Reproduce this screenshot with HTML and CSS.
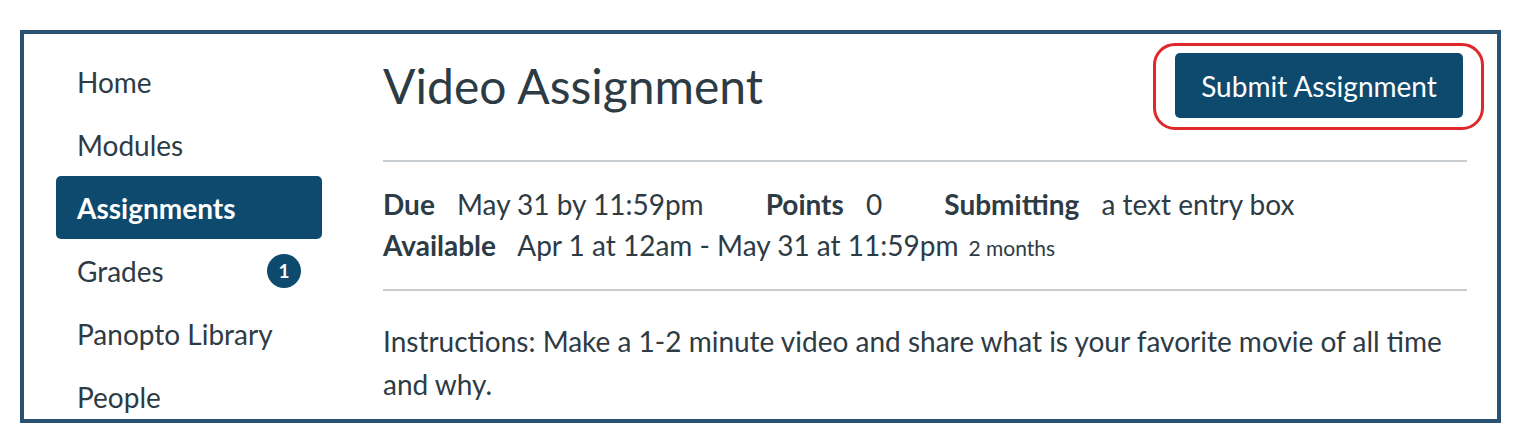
FILE: index.html
```html
<!DOCTYPE html>
<html lang="en">
<head>
    <meta charset="UTF-8">
    <meta name="viewport" content="width=device-width, initial-scale=1.0">
    <title>Video Assignment</title>
    <link rel="stylesheet" href="styles.css">
</head>
<body>
    <div id="page">
        <div id="frame">
            <nav id="course-nav">
                <a class="nav-item" href="#">Home</a>
                <a class="nav-item" href="#">Modules</a>
                <a class="nav-item active" href="#">Assignments</a>
                <a class="nav-item" href="#">Grades <span class="badge">1</span></a>
                <a class="nav-item" href="#">Panopto Library</a>
                <a class="nav-item" href="#">People</a>
            </nav>
            <main id="assignment">
                <div class="assignment-header">
                    <h1>Video Assignment</h1>
                    <span class="highlight">
                        <button id="submit-button">Submit Assignment</button>
                    </span>
                </div>
                <div class="details">
                    <div class="detail-row">
                        <span class="detail"><b>Due</b> May 31 by 11:59pm</span>
                        <span class="detail"><b>Points</b> 0</span>
                        <span class="detail"><b>Submitting</b> a text entry box</span>
                    </div>
                    <div class="detail-row">
                        <span class="detail"><b>Available</b> Apr 1 at 12am - May 31 at 11:59pm<small>2 months</small></span>
                    </div>
                </div>
                <p class="instructions">Instructions: Make a 1-2 minute video and share what is your favorite movie of all time and why.</p>
            </main>
        </div>
    </div>
</body>
</html>
```

FILE: styles.css
```css
:root {
    --text-color: #2d3b45;
    --brand: #0e4a6e;
    --frame: #2a5273;
    --divider: #c7cdd1;
    --annotation: #e0282a;
}

body {
    margin: 0;
    padding: 0;
    background-color: white;
    font-family: Lato, "Noto Sans", sans-serif;
    color: var(--text-color);
}
#page {
    padding: 30px 23px 0 20px;
}
#frame {
    height: 393px;
    box-sizing: border-box;
    border: 4px solid var(--frame);
    display: flex;
    overflow: hidden;
}
#course-nav {
    width: 266px;
    flex-shrink: 0;
    padding: 16px 0 0 32px;
    display: flex;
    flex-direction: column;
}
.nav-item {
    height: 63px;
    flex-shrink: 0;
    display: flex;
    align-items: center;
    justify-content: space-between;
    padding: 0 21px 0 21px;
    border-radius: 5px;
    font-size: 28px;
    color: var(--text-color);
    text-decoration: none;
}
.nav-item.active {
    background-color: var(--brand);
    color: white;
    font-weight: bold;
}
.badge {
    width: 34px;
    height: 34px;
    border-radius: 50%;
    background-color: var(--brand);
    color: white;
    font-size: 19px;
    font-weight: bold;
    display: flex;
    align-items: center;
    justify-content: center;
}
#assignment {
    flex-grow: 1;
    padding: 19px 30px 0 61px;
}
.assignment-header {
    display: flex;
    justify-content: space-between;
    align-items: center;
    padding-bottom: 42px;
    border-bottom: 2px solid var(--divider);
}
.assignment-header h1 {
    margin: 0;
    font-size: 48px;
    font-weight: normal;
}
.highlight {
    position: relative;
    margin-right: 4px;
}
/* red annotation ring round the button */
.highlight::after {
    content: "";
    position: absolute;
    top: -10px;
    bottom: -12px;
    left: -22px;
    right: -21px;
    border: 3px solid var(--annotation);
    border-radius: 22px;
}
#submit-button {
    display: block;
    width: 288px;
    height: 65px;
    background-color: var(--brand);
    color: white;
    border: none;
    border-radius: 5px;
    font-family: inherit;
    font-size: 28px;
}
.details {
    padding: 22px 0 21px 0;
    border-bottom: 2px solid var(--divider);
    font-size: 28px;
}
.detail-row {
    display: flex;
    gap: 62px;
    line-height: 41px;
}
.detail b {
    margin-right: 15px;
}
.detail small {
    font-size: 21px;
    margin-left: 10px;
}
.instructions {
    margin: 29px 0 0 0;
    font-size: 28px;
    line-height: 43px;
}
```
